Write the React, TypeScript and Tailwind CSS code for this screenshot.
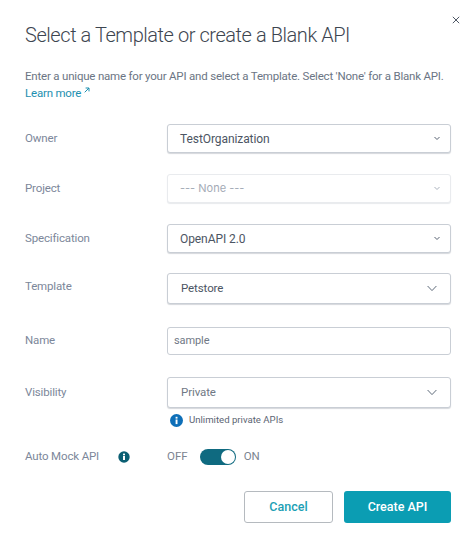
import React from "react";

function Chevron({ large, light }: { large?: boolean; light?: boolean }) {
  return large ? (
    <svg width="10" height="7" viewBox="0 0 10 7" fill="none" className="shrink-0">
      <path d="M0.6 1 L5 5.6 L9.4 1" stroke="#5f6b7a" strokeWidth="1" />
    </svg>
  ) : (
    <svg width="6" height="5" viewBox="0 0 6 5" fill="none" className="shrink-0">
      <path d="M0.5 1 L3 3.5 L5.5 1" stroke={light ? "#a9b1bc" : "#566070"} strokeWidth="1" />
    </svg>
  );
}

function Label({ children }: { children: React.ReactNode }) {
  return <div className="w-[142px] shrink-0 text-[11.5px] tracking-[-0.15px] text-[#7c879a]">{children}</div>;
}

function Select({
  value,
  h,
  large,
  disabled,
  pl,
  textClass,
}: {
  value: string;
  h: string;
  large?: boolean;
  disabled?: boolean;
  pl: string;
  textClass: string;
}) {
  return (
    <div
      className={`${h} ${pl} ${large ? "pr-[13px]" : "pr-[10px]"} flex-1 flex items-center justify-between rounded-[3px] border bg-white ${
        disabled ? "border-[#e9ebee] shadow-[0_1px_1px_#e8eaed]" : "border-[#c9ced5] shadow-[0_1px_1px_#d5d8dc]"
      }`}
    >
      <span className={textClass}>{value}</span>
      <Chevron large={large} light={disabled} />
    </div>
  );
}

export default function App() {
  return (
    <div className="relative w-[474px] h-[542px] bg-white overflow-hidden pl-[25px] pr-[23px] pt-[22px] font-['Roboto','Liberation_Sans',sans-serif]">
      <button className="absolute left-[452px] top-[16px] w-[8px] h-[8px]" aria-label="Close">
        <svg width="8" height="8" viewBox="0 0 8 8" fill="none" className="block">
          <path d="M0.8 0.8 L7.2 7.2 M7.2 0.8 L0.8 7.2" stroke="#4f5966" strokeWidth="1" />
        </svg>
      </button>

      <h1 className="text-[20px] leading-[26px] font-light tracking-[-0.44px] text-[#3d4550] whitespace-nowrap">
        Select a Template or create a Blank API
      </h1>

      <p className="mt-[20px] text-[11.5px] leading-[17px] tracking-[-0.2px] text-[#6b7584] whitespace-nowrap">
        Enter a unique name for your API and select a Template. Select 'None' for a Blank API.
        <br />
        <span className="inline-flex items-start text-[#1d8fb0]">
          Learn more
          <svg width="6" height="6" viewBox="0 0 6 6" fill="none" className="ml-[3px] mt-[2px]">
            <path d="M0.7 5.3 L5 1 M1.6 1 H5 V4.4" stroke="#1d8fb0" strokeWidth="1" />
          </svg>
        </span>
      </p>

      <div className="mt-[22px] h-[29px] flex items-center">
        <Label>Owner</Label>
        <Select value="TestOrganization" h="h-[29px]" pl="pl-[12px]" textClass="text-[12px] tracking-[-0.08px] text-[#4c5563]" />
      </div>

      <div className="mt-[21px] h-[29px] flex items-center">
        <Label>Project</Label>
        <Select value="--- None ---" h="h-[29px]" pl="pl-[12px]" disabled textClass="font-['Inter',sans-serif] text-[11px] text-[#a4abb6]" />
      </div>

      <div className="mt-[21px] h-[29px] flex items-center">
        <Label>Specification</Label>
        <Select value="OpenAPI 2.0" h="h-[29px]" pl="pl-[12px]" textClass="text-[12px] tracking-[-0.08px] text-[#4c5563]" />
      </div>

      <div className="mt-[20px] h-[31px] flex items-center">
        <Label>
          <span className="relative -top-[2px]">Template</span>
        </Label>
        <Select value="Petstore" h="h-[31px]" pl="pl-[13px]" large textClass="text-[11.5px] tracking-[-0.1px] text-[#4c5563]" />
      </div>

      <div className="mt-[23px] h-[28px] flex items-center">
        <Label>Name</Label>
        <div className="h-[28px] flex-1 flex items-center rounded-[3px] border border-[#c9ced5] bg-white pl-[6px] text-[11px] tracking-[-0.1px] text-[#6f7885]">
          sample
        </div>
      </div>

      <div className="mt-[22px] h-[31px] flex items-center">
        <Label>Visibility</Label>
        <Select value="Private" h="h-[31px]" pl="pl-[13px]" large textClass="text-[11.5px] tracking-[-0.1px] text-[#6f7885]" />
      </div>

      <div className="mt-[5px] ml-[145px] h-[14px] flex items-center gap-[6px]">
        <svg width="13" height="13" viewBox="0 0 13 13">
          <circle cx="6.5" cy="6.5" r="6.5" fill="#0e6fb8" />
          <rect x="5.6" y="5.5" width="1.9" height="4.6" fill="#fff" />
          <rect x="5.6" y="2.8" width="1.9" height="1.8" fill="#fff" />
        </svg>
        <span className="text-[9.6px] text-[#5c6573]">Unlimited private APIs</span>
      </div>

      <div className="mt-[22px] h-[16px] flex items-center">
        <div className="w-[142px] shrink-0 flex items-center">
          <span className="w-[93px] text-[11.5px] tracking-[-0.15px] text-[#7c879a]">Auto Mock API</span>
          <svg width="12" height="12" viewBox="0 0 12 12">
            <circle cx="6" cy="6" r="5.7" fill="#0b5f73" />
            <rect x="5" y="5" width="2" height="4" fill="#fff" />
            <rect x="5" y="2.6" width="2" height="1.7" fill="#fff" />
          </svg>
        </div>
        <span className="text-[11.5px] text-[#7c8490]">OFF</span>
        <div className="ml-[12px] w-[36px] h-[16px] rounded-full bg-[#0f6a80] flex items-center justify-end pr-[1px]">
          <div className="w-[14px] h-[14px] rounded-full bg-white" />
        </div>
        <span className="ml-[8px] text-[11.5px] text-[#7c8490]">ON</span>
      </div>

      <div className="mt-[26px] flex justify-end gap-[11px]">
        <button className="w-[89px] h-[32px] rounded-[3px] border border-[#b5babf] bg-white text-[12.5px] font-medium text-[#1c9fb5]">
          Cancel
        </button>
        <button className="w-[107px] h-[32px] rounded-[3px] bg-[#0b9db3] text-[12.5px] font-medium text-white">
          Create API
        </button>
      </div>
    </div>
  );
}
